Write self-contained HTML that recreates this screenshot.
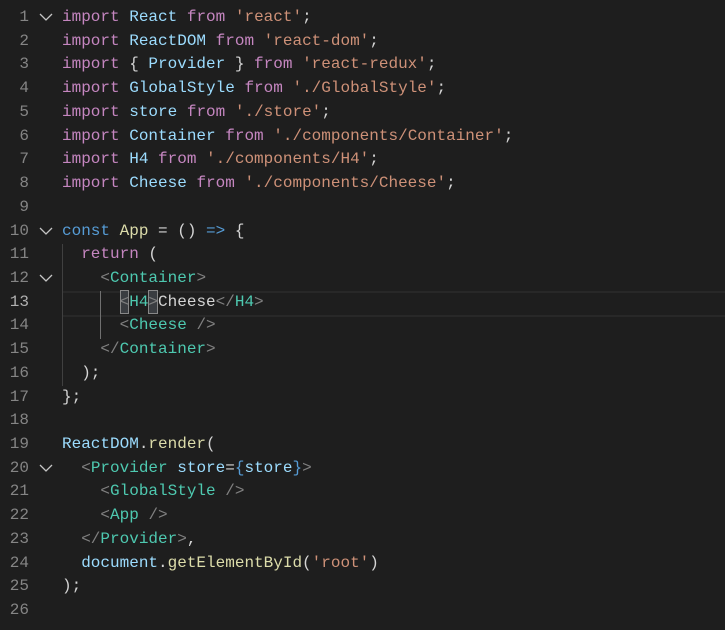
<!DOCTYPE html>
<html><head><style>
body{margin:0;background:#1e1e1e;width:725px;height:630px;overflow:hidden;position:relative;font-family:"Liberation Mono",monospace;font-size:16px}
.l{position:absolute;left:0;height:24px;line-height:24px;width:725px;white-space:pre}
.n{position:absolute;left:0;width:29px;text-align:right;color:#858585}
.c{position:absolute;left:62px;color:#d4d4d4}
.f{position:absolute;left:38px;top:5px;width:16px;height:14px}
.k{color:#c586c0}.v{color:#9cdcfe}.s{color:#ce9178}.b{color:#569cd6}.y{color:#dcdcaa}.t{color:#4ec9b0}.g{color:#808080}.w{color:#d4d4d4}
.hl{position:absolute;left:62px;top:291px;width:663px;height:22px;border-top:2px solid #282828;border-bottom:2px solid #282828}
.ig{position:absolute;width:1px;background:#404040}
.bm{display:inline-block;outline:1px solid #888;outline-offset:-1px;background:#3a3d41}
</style></head><body>
<div class="hl"></div>
<div class="ig" style="left:62px;top:244px;height:142px"></div>
<div class="ig" style="left:100px;top:291px;height:48px;background:#707070"></div>
<div id="code"></div>
<script>
const L=[
'<span class="k">import</span> <span class="v">React</span> <span class="k">from</span> <span class="s">\'react\'</span>;',
'<span class="k">import</span> <span class="v">ReactDOM</span> <span class="k">from</span> <span class="s">\'react-dom\'</span>;',
'<span class="k">import</span> { <span class="v">Provider</span> } <span class="k">from</span> <span class="s">\'react-redux\'</span>;',
'<span class="k">import</span> <span class="v">GlobalStyle</span> <span class="k">from</span> <span class="s">\'./GlobalStyle\'</span>;',
'<span class="k">import</span> <span class="v">store</span> <span class="k">from</span> <span class="s">\'./store\'</span>;',
'<span class="k">import</span> <span class="v">Container</span> <span class="k">from</span> <span class="s">\'./components/Container\'</span>;',
'<span class="k">import</span> <span class="v">H4</span> <span class="k">from</span> <span class="s">\'./components/H4\'</span>;',
'<span class="k">import</span> <span class="v">Cheese</span> <span class="k">from</span> <span class="s">\'./components/Cheese\'</span>;',
'',
'<span class="b">const</span> <span class="y">App</span> = () <span class="b">=&gt;</span> {',
'  <span class="k">return</span> (',
'    <span class="g">&lt;</span><span class="t">Container</span><span class="g">&gt;</span>',
'      <span class="g bm">&lt;</span><span class="t">H4</span><span class="g bm">&gt;</span>Cheese<span class="g">&lt;/</span><span class="t">H4</span><span class="g">&gt;</span>',
'      <span class="g">&lt;</span><span class="t">Cheese</span> <span class="g">/&gt;</span>',
'    <span class="g">&lt;/</span><span class="t">Container</span><span class="g">&gt;</span>',
'  );',
'};',
'',
'<span class="v">ReactDOM</span>.<span class="y">render</span>(',
'  <span class="g">&lt;</span><span class="t">Provider</span> <span class="v">store</span>=<span class="b">{</span><span class="v">store</span><span class="b">}</span><span class="g">&gt;</span>',
'    <span class="g">&lt;</span><span class="t">GlobalStyle</span> <span class="g">/&gt;</span>',
'    <span class="g">&lt;</span><span class="t">App</span> <span class="g">/&gt;</span>',
'  <span class="g">&lt;/</span><span class="t">Provider</span><span class="g">&gt;</span>,',
'  <span class="v">document</span>.<span class="y">getElementById</span>(<span class="s">\'root\'</span>)',
');',
''];
const fold={1:1,10:1,12:1,20:1};
let h='';
L.forEach((c,i)=>{const n=i+1;
h+=`<div class="l" style="top:${(5+23.72*i).toFixed(1)}px"><span class="n"${n==13?' style="color:#b0b0b0"':''}>${n}</span>`+
(fold[n]?'<svg class="f" viewBox="0 0 16 14"><path d="M2 4 L8 10 L14 4" fill="none" stroke="#c5c5c5" stroke-width="1.3"/></svg>':'')+
`<span class="c">${c}</span></div>`;});
document.getElementById('code').innerHTML=h;
</script>
</body></html>
